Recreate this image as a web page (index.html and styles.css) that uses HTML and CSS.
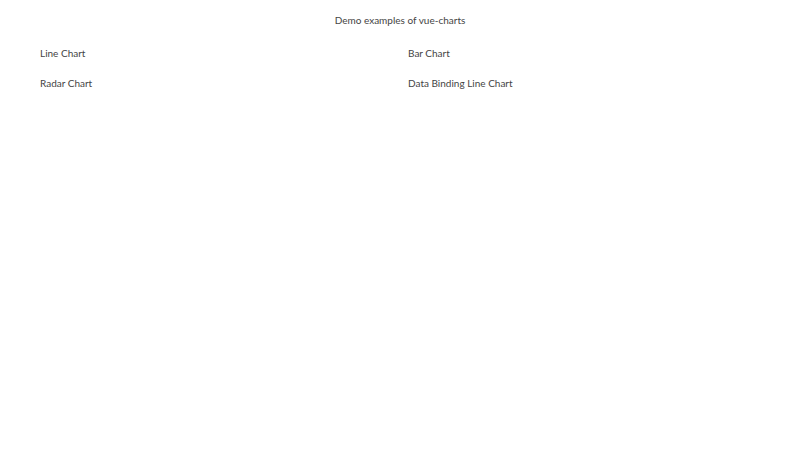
FILE: index.html
```html
<!DOCTYPE html>
<html>
<head>
<meta charset="utf-8">
<link rel="stylesheet" href="styles.css">
</head>
<body>
<div class="app">
  <h1 class="title">Demo examples of vue-charts</h1>
  <div class="grid">
    <div class="item">Line Chart</div>
    <div class="item">Bar Chart</div>
    <div class="item">Radar Chart</div>
    <div class="item">Data Binding Line Chart</div>
  </div>
</div>
</body>
</html>
```
FILE: styles.css
```css
html, body {
  margin: 0;
  padding: 0;
  background: #fff;
}
body {
  font-family: Lato, "Open Sans", sans-serif;
  font-size: 10px;
  color: #444;
}
.app {
  padding: 12px 0 0 40px;
}
.title {
  margin: 0 0 0 -40px;
  font-size: 10px;
  font-weight: normal;
  text-align: center;
  line-height: 16px;
}
.grid {
  display: grid;
  grid-template-columns: 368px 368px;
  row-gap: 14px;
  margin-top: 17px;
}
.item {
  line-height: 16px;
}
```
